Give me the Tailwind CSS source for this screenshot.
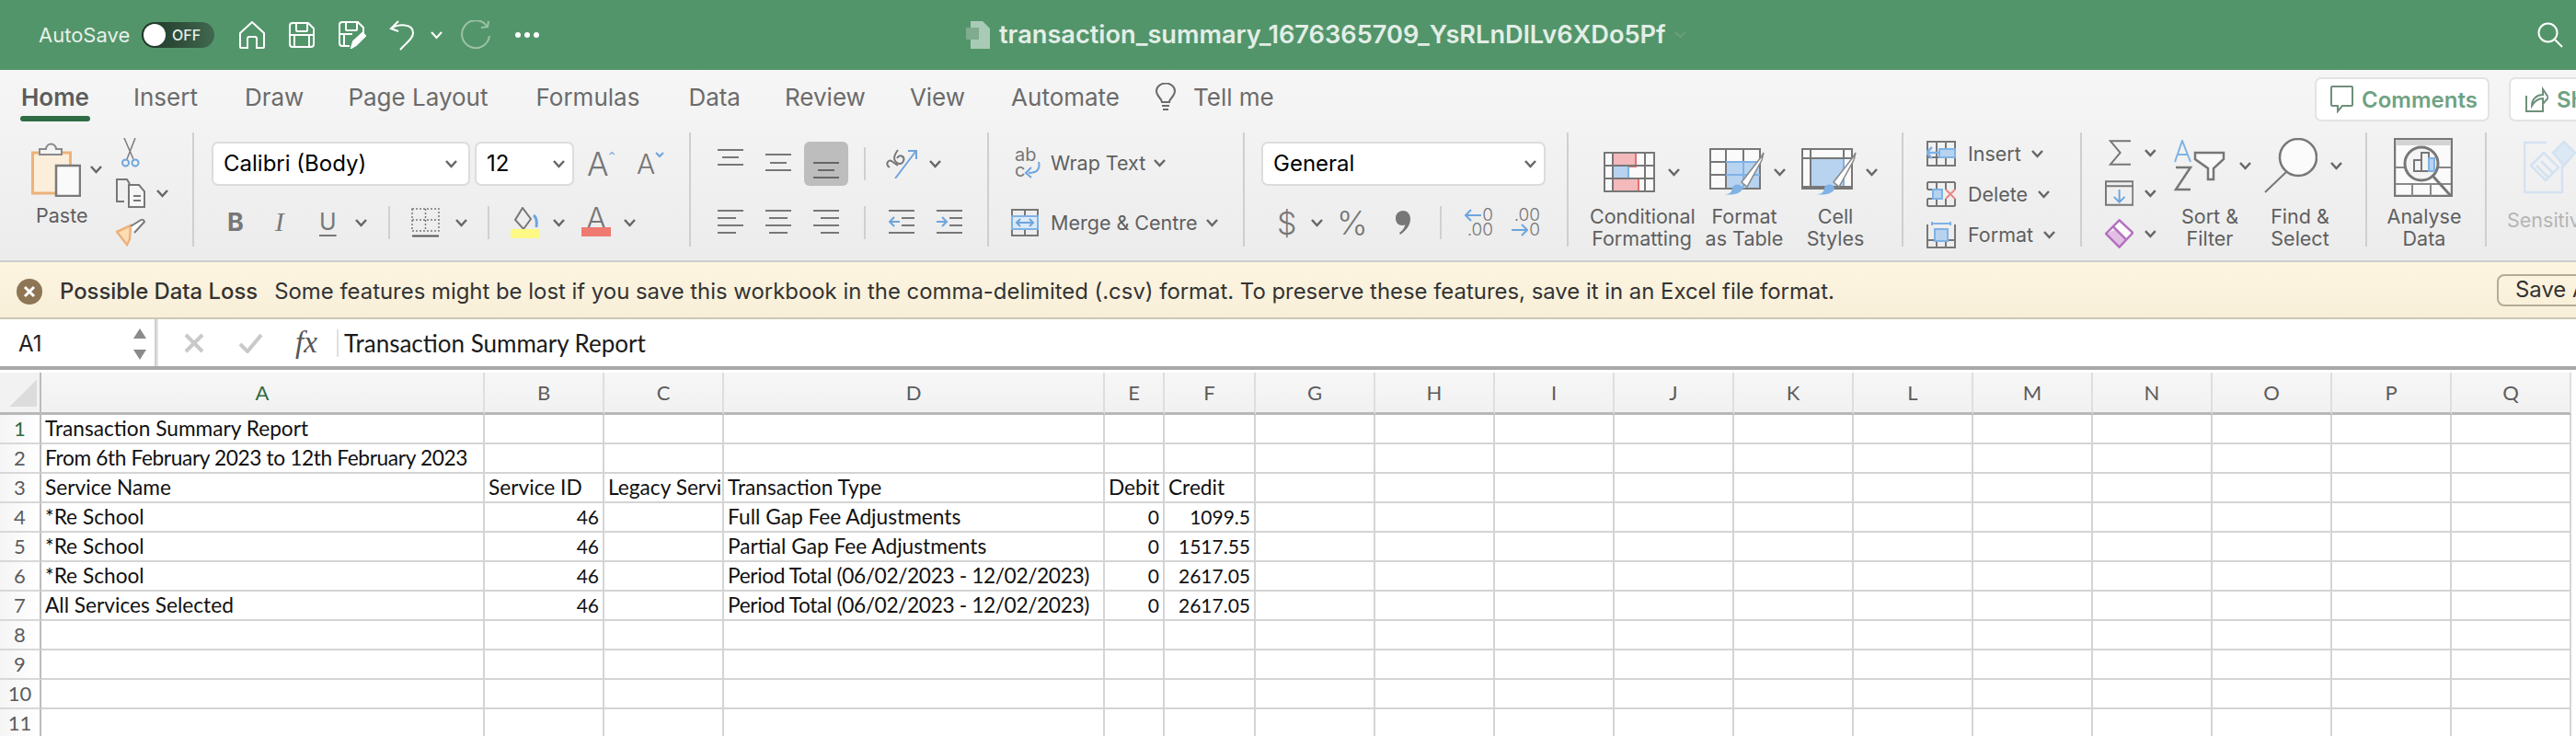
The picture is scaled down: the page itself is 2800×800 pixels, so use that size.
<!DOCTYPE html>
<html lang="en">
<head>
  <meta charset="UTF-8" />
  <title>transaction_summary_1676365709_YsRLnDlLv6XDo5Pf</title>
  <script src="https://cdn.jsdelivr.net/npm/@tailwindcss/browser@4"></script>
</head>
<body class="w-[2800px] h-[800px] overflow-hidden bg-white font-['Inter','Noto_Sans',sans-serif]">

  <!-- title bar -->
  <header class="h-[76px] bg-[#53956a] flex items-center text-white">
    <span class="ml-[42px] w-[112px] text-[22px] text-[#e6f0ea]">AutoSave</span>
    <div class="w-[79px] h-[28px] rounded-full bg-gradient-to-r from-[#1d3325] to-[#41694f] flex items-center pl-[2px]">
      <span class="w-[24px] h-[24px] rounded-full bg-white"></span>
      <span class="ml-[7px] text-[16px] text-[#e6f0ea] font-medium">OFF</span>
    </div>
    <svg class="ml-[27px]" width="28" height="30" viewBox="0 0 28 30" fill="none" stroke="#fff" stroke-width="2"><path d="M1 13 14 1l13 12v15a1 1 0 0 1-1 1h-7v-10a2 2 0 0 0-2-2h-6a2 2 0 0 0-2 2v10H2a1 1 0 0 1-1-1z"/></svg>
    <svg class="ml-[26px]" width="28" height="28" viewBox="0 0 28 28" fill="none" stroke="#fff" stroke-width="2"><path d="M4 1h17l6 6v17a3 3 0 0 1-3 3H4a3 3 0 0 1-3-3V4a3 3 0 0 1 3-3z"/><path d="M8 1v8a1 1 0 0 0 1 1h10a1 1 0 0 0 1-1V1M1 14h26M6 14v13M22 14v13"/></svg>
    <svg class="ml-[26px]" width="30" height="30" viewBox="0 0 30 30" fill="none" stroke="#fff" stroke-width="2"><path d="M12 27H4a3 3 0 0 1-3-3V4a3 3 0 0 1 3-3h17l6 6v7"/><path d="M8 1v8a1 1 0 0 0 1 1h10a1 1 0 0 0 1-1V1M1 14h14M6 14v13"/><path d="M14 29l2-7 10-9 3 3-10 10z" fill="#fff"/></svg>
    <svg class="ml-[25px]" width="28" height="33" viewBox="0 0 28 33" fill="none" stroke="#fff" stroke-width="2"><path d="M10 1 2 9l8 3"/><path d="M2 9c8-5 24-6 24 5 0 6-7 10-14 18"/></svg>
    <svg class="ml-[17px]" width="13" height="9" viewBox="0 0 13 9" fill="none" stroke="#fff" stroke-width="2"><path d="m1 1 5.500 6L12 1"/></svg>
    <svg class="ml-[20px]" width="33" height="33" viewBox="0 0 33 33" fill="none" stroke="#9cc2a9" stroke-width="2"><path d="M28 6A15 15 0 1 0 31 17"/><path d="M22 8l7-1 1-6"/></svg>
    <span class="ml-[26px] flex gap-[4px]"><i class="w-[6px] h-[6px] rounded-full bg-white"></i><i class="w-[6px] h-[6px] rounded-full bg-white"></i><i class="w-[6px] h-[6px] rounded-full bg-white"></i></span>
    <svg class="ml-[464px]" width="26" height="30" viewBox="0 0 26 30"><path d="M5 0h13l8 8v22H5z" fill="#a9cbb5"/><path d="M0 7h14v13H0z" fill="#7fab8f"/></svg>
    <span class="ml-[10px] text-[27.2px] font-semibold text-[#e3eee7] whitespace-nowrap">transaction_summary_1676365709_YsRLnDlLv6XDo5Pf</span>
    <svg class="ml-[9px]" width="13" height="8" viewBox="0 0 13 8" fill="none" stroke="#6b9f7e" stroke-width="2"><path d="m1 1 5.500 5L12 1"/></svg>
    <svg class="ml-auto mr-[14px]" width="28" height="28" viewBox="0 0 28 28" fill="none" stroke="#fff" stroke-width="2"><circle cx="11.500" cy="11.500" r="10"/><path d="m19 19 8 8"/></svg>
  </header>

  <!-- ribbon -->
  <section class="h-[209px] border-b-2 border-[#cdcdcd] bg-gradient-to-b from-[#f6f6f6] to-[#ececec] overflow-hidden">
    <!-- tabs -->
    <nav class="h-[68px] flex text-[26px] text-[#6b6b6b] whitespace-nowrap">
      <div class="ml-[22px] w-[76px] h-[56px] flex flex-col items-center">
        <span class="mt-[10px] font-semibold text-[#5c5c5c]">Home</span>
        <span class="mt-auto w-full h-[6px] rounded-full bg-[#2f6b45]"></span>
      </div>
      <span class="ml-[47px] mt-[10px]">Insert</span>
      <span class="ml-[51px] mt-[10px]">Draw</span>
      <span class="ml-[48px] mt-[10px]">Page Layout</span>
      <span class="ml-[52px] mt-[10px]">Formulas</span>
      <span class="ml-[53px] mt-[10px]">Data</span>
      <span class="ml-[48px] mt-[10px]">Review</span>
      <span class="ml-[48px] mt-[10px]">View</span>
      <span class="ml-[50px] mt-[10px]">Automate</span>
      <svg class="ml-[39px] mt-[14px]" width="22" height="30" viewBox="0 0 22 30" fill="none" stroke="#6b6b6b" stroke-width="2"><path d="M7 21c0-4-6-6-6-12a10 8.500 0 0 1 20 0c0 6-6 8-6 12z"/><path d="M7 25h8M8 29h6"/></svg>
      <span class="ml-[19px] mt-[10px]">Tell me</span>
      <div class="ml-auto mt-[8px] w-[190px] h-[48px] shrink-0 bg-white border-2 border-[#e3e3e3] rounded-[7px] flex items-center">
        <svg class="ml-[15px] shrink-0" width="25" height="30" viewBox="0 0 25 30" fill="none" stroke="#6f8f7b" stroke-width="2"><path d="M2 1h21a1 1 0 0 1 1 1v19a1 1 0 0 1-1 1H13l-5 6v-6H2a1 1 0 0 1-1-1V2a1 1 0 0 1 1-1z"/></svg>
        <span class="ml-[9px] mt-[2px] text-[24px] font-semibold text-[#6fa283]">Comments</span>
      </div>
      <div class="ml-[21px] mt-[8px] -mr-[60px] w-[133px] h-[48px] shrink-0 bg-white border-2 border-[#e3e3e3] rounded-[7px] flex items-center">
        <svg class="ml-[16px] shrink-0" width="25" height="28" viewBox="0 0 25 28" fill="none" stroke="#6f8f7b" stroke-width="2"><path d="M1 10v17h18v-7"/><path d="M7 21c0-8 6-12 12-12V3l6 9-6 7v-6c-6 0-9 3-12 8z"/></svg>
        <span class="ml-[9px] mt-[2px] text-[24px] font-semibold text-[#6fa283]">Share</span>
      </div>
    </nav>

    <!-- groups -->
    <div class="flex h-[124px] text-[#5f5f5f] text-[21.5px] whitespace-nowrap">

      <!-- clipboard -->
      <div class="w-[211px] shrink-0 border-r-2 border-[#cfcfcf] flex">
        <div class="w-[126px] shrink-0">
          <div class="pl-[34px] pt-[10px] flex items-center">
            <svg width="54" height="60" viewBox="0 0 54 60" fill="none"><rect x="1.500" y="12" width="41" height="44" fill="#fbeedb" stroke="#edb27a" stroke-width="3"/><path d="M9 14V8h7a5 5 0 0 1 11 0h6v6z" fill="#f4f4f4" stroke="#8a8a8a" stroke-width="2"/><rect x="27" y="26" width="26" height="33" fill="#fafafa" stroke="#7a7a7a" stroke-width="2.500"/></svg>
            <svg class="ml-[10px]" width="13" height="9" viewBox="0 0 13 9" fill="none" stroke="#666" stroke-width="2.500"><path d="m1 1 5.500 6L12 1"/></svg>
          </div>
          <div class="pl-[39px] mt-[4px]">Paste</div>
        </div>
        <div class="flex flex-col">
          <svg class="ml-[6px] mt-[6px]" width="20" height="32" viewBox="0 0 20 32" fill="none"><path d="M3 0 13 23M15 0 6 23" stroke="#7a7a7a" stroke-width="1.500"/><circle cx="4.500" cy="27" r="3.500" stroke="#6ea5dd" stroke-width="2"/><circle cx="15" cy="27" r="3.500" stroke="#6ea5dd" stroke-width="2"/></svg>
          <div class="flex items-center mt-[12px]">
            <svg width="32" height="32" viewBox="0 0 32 32" fill="none" stroke="#777" stroke-width="2"><path d="M9 25H1V1h11l3 5"/><path d="M14 7h11l6 7v17H14z" fill="#f6f6f6"/><path d="M19 19h8M19 24h8"/></svg>
            <svg class="ml-[12px]" width="13" height="9" viewBox="0 0 13 9" fill="none" stroke="#666" stroke-width="2.500"><path d="m1 1 5.500 6L12 1"/></svg>
          </div>
          <svg class="mt-[12px]" width="32" height="30" viewBox="0 0 32 30" fill="none"><path d="M1 14 16 7l-1 15-3 6z" fill="#fbdcb5" stroke="#edb27a" stroke-width="2.500"/><path d="m16 8 13-8 2 3-11 12" fill="#fff" stroke="#7a7a7a" stroke-width="2"/></svg>
        </div>
      </div>

      <!-- font -->
      <div class="w-[540px] shrink-0 border-r-2 border-[#cfcfcf] pl-[19px] pt-[10px]">
        <div class="flex items-center h-[48px]">
          <div class="w-[281px] h-[48px] bg-white border-2 border-[#dcdcdc] rounded-[7px] flex items-center pl-[11px] pr-[12px] text-[24px] text-black">
            <span>Calibri (Body)</span>
            <svg class="ml-auto" width="13" height="9" viewBox="0 0 13 9" fill="none" stroke="#666" stroke-width="2.500"><path d="m1 1 5.500 6L12 1"/></svg>
          </div>
          <div class="ml-[5px] w-[108px] h-[48px] bg-white border-2 border-[#dcdcdc] rounded-[7px] flex items-center pl-[11px] pr-[8px] text-[24px] text-black">
            <span>12</span>
            <svg class="ml-auto" width="13" height="9" viewBox="0 0 13 9" fill="none" stroke="#666" stroke-width="2.500"><path d="m1 1 5.500 6L12 1"/></svg>
          </div>
          <div class="ml-[14px] flex w-[30px] text-[35px] font-light text-[#777] leading-none">A<svg class="mt-[2px]" width="10" height="7" viewBox="0 0 10 7" fill="none" stroke="#6ea5dd" stroke-width="2"><path d="m1 6 4-4 4 4"/></svg></div>
          <div class="ml-[24px] flex text-[30px] font-light text-[#777] leading-none">A<svg class="mt-[2px]" width="10" height="7" viewBox="0 0 10 7" fill="none" stroke="#6ea5dd" stroke-width="2"><path d="m1 1 4 4 4-4"/></svg></div>
        </div>
        <div class="flex items-center h-[36px] mt-[22px] text-[#777]">
          <span class="w-[14px] ml-[17px] text-[27px] font-bold">B</span>
          <span class="w-[14px] ml-[38px] text-[29px] font-['Liberation_Serif'] italic">I</span>
          <span class="w-[17px] ml-[34px] text-[25px] underline underline-offset-[5px]">U</span>
          <svg class="ml-[22px]" width="13" height="9" viewBox="0 0 13 9" fill="none" stroke="#666" stroke-width="2.500"><path d="m1 1 5.500 6L12 1"/></svg>
          <span class="ml-[23px] w-[2px] h-[36px] bg-[#d0d0d0]"></span>
          <svg class="ml-[23px]" width="31" height="32" viewBox="0 0 31 32" fill="none" stroke="#777"><path d="M1 1h29v24H1zM15.500 1v24M1 13h29" stroke-width="1.500" stroke-dasharray="2 2"/><path d="M1 30.500h29" stroke="#555" stroke-width="2"/></svg>
          <svg class="ml-[17px]" width="13" height="9" viewBox="0 0 13 9" fill="none" stroke="#666" stroke-width="2.500"><path d="m1 1 5.500 6L12 1"/></svg>
          <span class="ml-[22px] w-[2px] h-[36px] bg-[#d0d0d0]"></span>
          <svg class="ml-[23px]" width="32" height="34" viewBox="0 0 32 34" fill="none"><path d="M13 1 5 14l9 10 8-11z" stroke="#777" stroke-width="2"/><path d="M25 9c3 2 4 6 3 13" stroke="#6ea5dd" stroke-width="3"/><rect y="24" width="32" height="10" fill="#fdf984"/></svg>
          <svg class="ml-[14px]" width="13" height="9" viewBox="0 0 13 9" fill="none" stroke="#666" stroke-width="2.500"><path d="m1 1 5.500 6L12 1"/></svg>
          <div class="ml-[18px] w-[32px] flex flex-col items-center leading-none"><span class="text-[33px] font-light h-[26px] -mt-[6px]">A</span><span class="w-full h-[10px] bg-[#ef7a71]"></span></div>
          <svg class="ml-[14px]" width="13" height="9" viewBox="0 0 13 9" fill="none" stroke="#666" stroke-width="2.500"><path d="m1 1 5.500 6L12 1"/></svg>
        </div>
      </div>

      <!-- alignment -->
      <div class="w-[324px] shrink-0 border-r-2 border-[#cfcfcf] pl-[29px] pt-[10px]">
        <div class="flex items-center h-[48px]">
          <svg width="28" height="48" viewBox="0 0 28 48" stroke="#777" stroke-width="2"><path d="M0 9h28M5 17h18M0 25h28"/></svg>
          <svg class="ml-[24px]" width="28" height="48" viewBox="0 0 28 48" stroke="#777" stroke-width="2"><path d="M0 14h28M5 23h18M0 31h28"/></svg>
          <div class="ml-[14px] w-[48px] h-[48px] rounded-[6px] bg-[#bdbdbd] flex justify-center"><svg width="28" height="48" viewBox="0 0 28 48" stroke="#666" stroke-width="2"><path d="M0 23h28M5 31h18M0 39h28"/></svg></div>
          <span class="ml-[17px] w-[2px] h-[36px] bg-[#d0d0d0]"></span>
          <svg class="ml-[22px]" width="34" height="32" viewBox="0 0 34 32" fill="none"><path d="M10 32 32 3M24 2l9 0 0 9" stroke="#6ea5dd" stroke-width="2"/><path d="M4 20c-5-3-2-9 2-7l7 5m-1-8c3-5 9-2 7 3s-7 3-9 0 0-8 3-12" stroke="#777" stroke-width="2"/></svg>
          <svg class="ml-[13px]" width="13" height="9" viewBox="0 0 13 9" fill="none" stroke="#666" stroke-width="2.500"><path d="m1 1 5.500 6L12 1"/></svg>
        </div>
        <div class="flex items-center h-[36px] mt-[22px]">
          <svg width="28" height="36" viewBox="0 0 28 36" stroke="#777" stroke-width="2"><path d="M0 5h28M0 13h20M0 21h28M0 29h20"/></svg>
          <svg class="ml-[24px]" width="28" height="36" viewBox="0 0 28 36" stroke="#777" stroke-width="2"><path d="M0 5h28M4 13h20M0 21h28M4 29h20"/></svg>
          <svg class="ml-[24px]" width="28" height="36" viewBox="0 0 28 36" stroke="#777" stroke-width="2"><path d="M0 5h28M8 13h20M0 21h28M8 29h20"/></svg>
          <span class="ml-[27px] w-[2px] h-[36px] bg-[#d0d0d0]"></span>
          <svg class="ml-[25px]" width="28" height="36" viewBox="0 0 28 36" fill="none"><path d="M0 5h28M14 13h14M14 21h14M0 29h28" stroke="#777" stroke-width="2"/><path d="M12 17H1m5-5-5 5 5 5" stroke="#6ea5dd" stroke-width="2"/></svg>
          <svg class="ml-[24px]" width="28" height="36" viewBox="0 0 28 36" fill="none"><path d="M0 5h28M14 13h14M14 21h14M0 29h28" stroke="#777" stroke-width="2"/><path d="M0 17h11m-5-5 5 5-5 5" stroke="#6ea5dd" stroke-width="2"/></svg>
        </div>
      </div>

      <!-- wrap and merge -->
      <div class="w-[278px] shrink-0 border-r-2 border-[#cfcfcf] pl-[24px] pt-[13px]">
        <div class="flex items-center h-[40px]">
          <div class="relative w-[43px] h-[40px] pl-[4px] text-[20px] text-[#777] leading-[17px] pt-[3px]">
            <div>ab</div>
            <div>c</div>
            <svg class="absolute left-[14px] top-[18px]" width="18" height="20" viewBox="0 0 18 20" fill="none" stroke="#6ea5dd" stroke-width="2"><path d="M16 1c2 8-2 12-11 12"/><path d="m8 7-6 6 6 5"/></svg>
          </div>
          <span>Wrap Text</span>
          <svg class="ml-[9px]" width="13" height="9" viewBox="0 0 13 9" fill="none" stroke="#666" stroke-width="2.500"><path d="m1 1 5.500 6L12 1"/></svg>
        </div>
        <div class="flex items-center h-[40px] mt-[25px]">
          <svg class="w-[30px]" height="30" viewBox="0 0 30 30" fill="none"><path d="M1 1h28v28H1zM1 8h28M1 22h28M15 1v7M15 22v7" stroke="#777" stroke-width="2"/><path d="M1 8h28v14H1z" fill="#dce9f7" stroke="#7fb2e5" stroke-width="2"/><path d="M6 15h18M10 11l-4 4 4 4M20 11l4 4-4 4" stroke="#6ea5dd" stroke-width="2"/></svg>
          <span class="ml-[13px]">Merge &amp; Centre</span>
          <svg class="ml-[9px]" width="13" height="9" viewBox="0 0 13 9" fill="none" stroke="#666" stroke-width="2.500"><path d="m1 1 5.500 6L12 1"/></svg>
        </div>
      </div>

      <!-- number -->
      <div class="w-[352px] shrink-0 border-r-2 border-[#cfcfcf] pl-[18px] pt-[10px]">
        <div class="w-[309px] h-[48px] bg-white border-2 border-[#dcdcdc] rounded-[7px] flex items-center pl-[11px] pr-[8px] text-[24px] text-black">
          <span>General</span>
          <svg class="ml-auto" width="13" height="9" viewBox="0 0 13 9" fill="none" stroke="#666" stroke-width="2.500"><path d="m1 1 5.500 6L12 1"/></svg>
        </div>
        <div class="flex items-center h-[36px] mt-[22px] text-[#777]">
          <span class="ml-[17px] w-[20px] text-[34px] font-light">$</span>
          <svg class="ml-[17px]" width="13" height="9" viewBox="0 0 13 9" fill="none" stroke="#666" stroke-width="2.500"><path d="m1 1 5.500 6L12 1"/></svg>
          <span class="ml-[15px] w-[40px] text-[36px] font-light">%</span>
          <svg class="ml-[24px]" width="16" height="26" viewBox="0 0 16 26" fill="#777"><path d="M8 0c5 0 8 4 8 9 0 7-5 13-11 17l-1-2c4-3 6-6 6-9-1 1-2 1-3 1-4 0-7-3-7-8s4-8 8-8z"/></svg>
          <span class="ml-[32px] w-[2px] h-[36px] bg-[#d0d0d0]"></span>
          <div class="ml-[25px] w-[31px] flex flex-col text-[19px] font-light leading-[16px]">
            <div class="flex items-center justify-end">
              <svg class="mr-[1px]" width="18" height="14" viewBox="0 0 18 14" fill="none" stroke="#6ea5dd" stroke-width="2"><path d="M18 7H2m5-6L1 7l6 6"/></svg>
              <span>0</span>
            </div>
            <div class="text-right">.00</div>
          </div>
          <div class="ml-[20px] w-[31px] flex flex-col text-[19px] font-light leading-[16px]">
            <div class="text-right">.00</div>
            <div class="flex items-center justify-end">
              <svg class="mr-[1px]" width="18" height="14" viewBox="0 0 18 14" fill="none" stroke="#6ea5dd" stroke-width="2"><path d="M0 7h16m-5-6 6 6-6 6"/></svg>
              <span>0</span>
            </div>
          </div>
        </div>
      </div>

      <!-- styles -->
      <div class="w-[364px] shrink-0 border-r-2 border-[#cfcfcf] flex text-center leading-[24px]">
        <div class="ml-[23px] w-[113px]">
          <div class="h-[70px] pl-[15px] pt-[16px] flex items-center">
            <svg width="56" height="44" viewBox="0 0 56 44" fill="none"><path d="M1 1h54v42H1z" fill="#fafafa"/><path d="M10 1h25v15H10zM10 29h28v14H10z" fill="#f4b9bb" stroke="#e0726c" stroke-width="2"/><path d="M10 15h17v14H10z" fill="#b7d3f0" stroke="#7fb2e5" stroke-width="2"/><path d="M1 1h54v42H1zM10 1v42M45 1v42M1 15h54M1 29h54" stroke="#777" stroke-width="2"/></svg>
            <svg class="ml-[14px]" width="13" height="9" viewBox="0 0 13 9" fill="none" stroke="#666" stroke-width="2.500"><path d="m1 1 5.500 6L12 1"/></svg>
          </div>
          <div class="mt-[9px]">Conditional<br />Formatting</div>
        </div>
        <div class="ml-[4px] w-[100px]">
          <div class="h-[70px] pl-[13px] pt-[16px] flex items-center">
            <svg width="60" height="52" viewBox="0 0 60 52" fill="none"><path d="M1 1h54v43H1z" fill="#fafafa"/><path d="M18 15h37v29H18z" fill="#b7d3f0"/><path d="M1 1h54v43H1zM18 1v43M37 1v43M1 15h54M1 29h54" stroke="#777" stroke-width="2"/><path d="M18 15h37M18 29h37M37 15v29" stroke="#7fb2e5" stroke-width="2"/><path d="M35 37 56 10l3-5-2 8-16 29z" fill="#fff" stroke="#888" stroke-width="1.500"/><path d="M15 50c6 1 10-2 10-7a6 6 0 0 1 11 0c0 6-10 9-21 7z" fill="#7fb2e5"/></svg>
            <svg class="ml-[10px]" width="13" height="9" viewBox="0 0 13 9" fill="none" stroke="#666" stroke-width="2.500"><path d="m1 1 5.500 6L12 1"/></svg>
          </div>
          <div class="mt-[9px] ml-[2px]">Format<br />as Table</div>
        </div>
        <div class="w-[100px]">
          <div class="h-[70px] pl-[13px] pt-[16px] flex items-center">
            <svg width="60" height="52" viewBox="0 0 60 52" fill="none"><path d="M1 1h54v43H1z" fill="#fafafa"/><path d="M10 11h36v31H10z" fill="#b7d3f0" stroke="#7fb2e5" stroke-width="2"/><path d="M1 1h54v43H1zM10 1v43M46 1v10M1 11h54M1 42h54" stroke="#777" stroke-width="2"/><path d="M35 37 56 10l3-5-2 8-16 29z" fill="#fff" stroke="#888" stroke-width="1.500"/><path d="M15 50c6 1 10-2 10-7a6 6 0 0 1 11 0c0 6-10 9-21 7z" fill="#7fb2e5"/></svg>
            <svg class="ml-[10px]" width="13" height="9" viewBox="0 0 13 9" fill="none" stroke="#666" stroke-width="2.500"><path d="m1 1 5.500 6L12 1"/></svg>
          </div>
          <div class="mt-[9px]">Cell<br />Styles</div>
        </div>
      </div>

      <!-- cells -->
      <div class="w-[194px] shrink-0 border-r-2 border-[#cfcfcf] pl-[25px] pt-[1px]">
        <div class="flex items-center h-[44px]">
          <svg width="32" height="28" viewBox="0 0 32 28" fill="none"><path d="M1 1h30v26H1zM11 1v26M21 1v26M1 18h30" stroke="#777" stroke-width="2"/><path d="M14 9h17v9H14z" fill="#b7d3f0" stroke="#7fb2e5" stroke-width="2"/><path d="M0 13h14M6 7l-6 6 6 6" stroke="#7fb2e5" stroke-width="2.500"/></svg>
          <span class="ml-[13px] w-[56px]">Insert</span>
          <svg class="ml-[13px]" width="13" height="9" viewBox="0 0 13 9" fill="none" stroke="#666" stroke-width="2.500"><path d="m1 1 5.500 6L12 1"/></svg>
        </div>
        <div class="flex items-center h-[44px]">
          <svg width="32" height="28" viewBox="0 0 32 28" fill="none"><path d="M1 1v8M11 1v8M21 1v8M31 1v8M1 19v8M11 19v8M21 19v8M31 19v8M1 1h30M1 27h30M1 9h6M1 19h6" stroke="#777" stroke-width="2"/><path d="M7 9h10v10H7z" fill="#b7d3f0" stroke="#7fb2e5" stroke-width="2"/><path d="m21 9 10 10M31 9 21 19" stroke="#ec8780" stroke-width="2"/></svg>
          <span class="ml-[13px] w-[63px]">Delete</span>
          <svg class="ml-[13px]" width="13" height="9" viewBox="0 0 13 9" fill="none" stroke="#666" stroke-width="2.500"><path d="m1 1 5.500 6L12 1"/></svg>
        </div>
        <div class="flex items-center h-[44px]">
          <svg width="32" height="30" viewBox="0 0 32 30" fill="none"><path d="M1 4v25h30V4M1 21h30M11 9v20M21 9v20" stroke="#777" stroke-width="2"/><path d="M9 9h14v13H9z" fill="#b7d3f0" stroke="#7fb2e5" stroke-width="2"/><path d="M6 1v4m20-4v4M6 3h20" stroke="#7fb2e5" stroke-width="2"/></svg>
          <span class="ml-[13px] w-[69px]">Format</span>
          <svg class="ml-[13px]" width="13" height="9" viewBox="0 0 13 9" fill="none" stroke="#666" stroke-width="2.500"><path d="m1 1 5.500 6L12 1"/></svg>
        </div>
      </div>

      <!-- editing -->
      <div class="w-[310px] shrink-0 border-r-2 border-[#cfcfcf] flex text-center leading-[24px]">
        <div class="ml-[25px] w-[56px]">
          <div class="flex items-center h-[44px]">
            <svg class="ml-[4px]" width="25" height="28" viewBox="0 0 25 28" fill="none" stroke="#777" stroke-width="2"><path d="M25 1H2l11 13L2 27h23"/></svg>
            <svg class="ml-[15px]" width="13" height="9" viewBox="0 0 13 9" fill="none" stroke="#666" stroke-width="2.500"><path d="m1 1 5.500 6L12 1"/></svg>
          </div>
          <div class="flex items-center h-[44px]">
            <svg width="32" height="28" viewBox="0 0 32 28" fill="none"><path d="M1 1h30v26H1zM1 6h30" stroke="#777" stroke-width="2"/><path d="M16 10v14m-6-6 6 6 6-6" stroke="#6ea5dd" stroke-width="2"/></svg>
            <svg class="ml-[12px]" width="13" height="9" viewBox="0 0 13 9" fill="none" stroke="#666" stroke-width="2.500"><path d="m1 1 5.500 6L12 1"/></svg>
          </div>
          <div class="flex items-center h-[44px]">
            <svg width="32" height="32" viewBox="0 0 32 32" fill="none"><path d="M1 16 10 25l6 6 15-16-8-8z" fill="#e2bee5"/><path d="m10 8 14 14 7-7L16 1z" fill="#fff"/><path d="M1 16 16 1l15 14-15 16zM9 8l14 14" stroke="#b56fc0" stroke-width="2.500"/></svg>
            <svg class="ml-[12px]" width="13" height="9" viewBox="0 0 13 9" fill="none" stroke="#666" stroke-width="2.500"><path d="m1 1 5.500 6L12 1"/></svg>
          </div>
        </div>
        <div class="ml-[18px] w-[100px] text-center">
          <div class="h-[70px] flex items-center pt-[2px]">
            <svg width="58" height="56" viewBox="0 0 58 56" fill="none"><path d="M2 24 10 1l9 23M5 16h11" stroke="#7fb2e5" stroke-width="2"/><path d="M3 30h16L3 54h16" stroke="#777" stroke-width="2.500"/><path d="M24 14h31v7L44 31v12h-6V31L24 21z" stroke="#777" stroke-width="2.500" fill="#f8f8f8"/></svg>
            <svg class="ml-[14px]" width="13" height="9" viewBox="0 0 13 9" fill="none" stroke="#666" stroke-width="2.500"><path d="m1 1 5.500 6L12 1"/></svg>
          </div>
          <div class="mt-[9px] -ml-[20px]">Sort &amp;<br />Filter</div>
        </div>
        <div class="ml-[-1px] w-[100px]">
          <div class="h-[70px] flex items-center pt-[2px]">
            <svg width="58" height="60" viewBox="0 0 58 60" fill="none" stroke="#777"><ellipse cx="37" cy="21" rx="20" ry="20" fill="#fbfbfb" stroke-width="2.500"/><path d="M24 37 1 59" stroke-width="2"/></svg>
            <svg class="ml-[14px]" width="13" height="9" viewBox="0 0 13 9" fill="none" stroke="#666" stroke-width="2.500"><path d="m1 1 5.500 6L12 1"/></svg>
          </div>
          <div class="mt-[9px] -ml-[22px]">Find &amp;<br />Select</div>
        </div>
      </div>

      <!-- analyse data -->
      <div class="w-[130px] shrink-0 border-r-2 border-[#cfcfcf] text-center leading-[24px]">
        <svg class="ml-[29px] mt-[6px]" width="64" height="64" viewBox="0 0 64 64" fill="none"><path d="M1 1h62v62H1z" fill="#fafafa" stroke="#777" stroke-width="2.500"/><path d="M2 2h60v6H2z" fill="#d4d4d4"/><path d="M2 32h60M2 50h60M20 50v13M40 50v13" stroke="#888" stroke-width="2"/><circle cx="30" cy="28" r="18" fill="#f4f4f4" stroke="#777" stroke-width="3"/><path d="M22 24h8v12h-8zM30 16h8v20h-8z" stroke="#777" stroke-width="2"/><path d="M38 22h6v14h-6z" fill="#b7d3f0" stroke="#7fb2e5" stroke-width="2"/><path d="m43 42 19 21" stroke="#777" stroke-width="3"/></svg>
        <div class="mt-[9px] -ml-[4px]">Analyse<br />Data</div>
      </div>

      <!-- sensitivity -->
      <div class="text-[#b5b5b5] flex-1 overflow-hidden">
        <svg class="ml-[40px] mt-[6px]" width="57" height="64" viewBox="0 0 57 64" fill="none" stroke="#d3e2f1" stroke-width="2.500"><path d="M42 30v29H1V5h24"/><path d="m8 30 14-14 16 16-14 14zM14 30l12 12M19 25l12 12" /><path d="m32 16 12-12 12 12-12 14z" fill="#dce8f4"/></svg>
        <div class="mt-[9px] ml-[22px]">Sensitivity</div>
      </div>
    </div>
  </section>

  <!-- message bar -->
  <div class="h-[62px] pt-[4px] border-b-2 border-[#cdc6b5] bg-gradient-to-b from-[#fdf5e0] to-[#f8efd9] flex items-center text-[23.900px] text-[#333] whitespace-nowrap">
    <svg class="ml-[18px]" width="28" height="28" viewBox="0 0 28 28"><circle cx="14" cy="14" r="14" fill="#8d7555"/><path d="m9 9 10 10M19 9 9 19" stroke="#fff" stroke-width="3"/></svg>
    <span class="ml-[19px] font-medium">Possible Data Loss</span>
    <span class="ml-[18px]">Some features might be lost if you save this workbook in the comma-delimited (.csv) format. To preserve these features, save it in an Excel file format.</span>
    <div class="ml-auto -mr-[30px] -mt-[4px] w-[116px] h-[35px] border-2 border-[#b5ab97] rounded-[8px] pl-[18px] flex items-center">Save As</div>
  </div>

  <!-- formula bar -->
  <div class="h-[53px] flex border-b-2 border-[#a8a8a8] bg-white">
    <div class="w-[170px] h-[51px] border-r-2 border-[#cfcfcf] flex items-center pl-[20px] pt-[2px] text-[24px] text-[#222]">
      <span>A1</span>
      <svg class="ml-auto mr-[9px]" width="14" height="34" viewBox="0 0 14 34" fill="#8a8a8a"><path d="M7 0l7 11H0zM7 34l7-11H0z"/></svg>
    </div>
    <span class="w-[2px] bg-[#e4e4e4]"></span>
    <div class="flex items-center flex-1">
      <svg class="ml-[28px]" width="22" height="22" viewBox="0 0 22 22" stroke="#c9c9c9" stroke-width="4"><path d="m2 2 18 18M20 2 2 20"/></svg>
      <svg class="ml-[37px]" width="27" height="22" viewBox="0 0 27 22" fill="none" stroke="#c9c9c9" stroke-width="4"><path d="m2 12 8 8L25 2"/></svg>
      <span class="ml-[35px] w-[31px] font-['Liberation_Serif'] italic text-[33px] text-[#555]">fx</span>
      <span class="ml-[14px] w-[2px] h-[30px] bg-[#e0e0e0]"></span>
      <span class="ml-[6px] pt-[2px] font-['Lato'] text-[26px] text-[#1a1a1a]">Transaction Summary Report</span>
    </div>
  </div>

  <!-- sheet -->
  <div class="pt-[3px] border-t-2 border-[#a8a8a8]">
    <div id="sheet" class="grid grid-cols-[45px_482px_130px_130px_414px_65px_99px_130px_130px_130px_130px_130px_130px_130px_130px_130px_130px_130px] grid-rows-[46px_repeat(11,32px)] font-['Lato'] text-[22.7px] text-[#111] leading-[30px]"></div>
  </div>

  <script>
    const columns = ['A','B','C','D','E','F','G','H','I','J','K','L','M','N','O','P','Q'];
    const rows = {
      1: {A: 'Transaction Summary Report'},
      2: {A: 'From 6th February 2023 to 12th February 2023'},
      3: {A: 'Service Name', B: 'Service ID', C: 'Legacy Service ID', D: 'Transaction Type', E: 'Debit', F: 'Credit'},
      4: {A: '*Re School', B: 46, D: 'Full Gap Fee Adjustments', E: 0, F: 1099.5},
      5: {A: '*Re School', B: 46, D: 'Partial Gap Fee Adjustments', E: 0, F: 1517.55},
      6: {A: '*Re School', B: 46, D: 'Period Total (06/02/2023 - 12/02/2023)', E: 0, F: '2617.05'},
      7: {A: 'All Services Selected', B: 46, D: 'Period Total (06/02/2023 - 12/02/2023)', E: 0, F: '2617.05'},
    };

    const sheet = document.getElementById('sheet');
    let html = '<div class="bg-[#f2f2f2] border-r-2 border-b-[3px] border-r-[#bcbcbc] border-b-[#b8b8b8] pl-[11px] pt-[8px]"><div class="w-[29px] h-[29px] bg-gradient-to-br from-transparent from-50% to-[#dcdcdc] to-50%"></div></div>';
    for (const col of columns) {
      const active = col === 'A' ? 'text-[#2f6b45]' : 'text-[#5c5c5c]';
      html += '<div class="bg-gradient-to-b from-[#f7f7f7] to-[#f1f1f1] border-r-2 border-b-[3px] border-r-[#dedede] border-b-[#b8b8b8] flex items-center justify-center ' + active + ' text-[22px]">' + col + '</div>';
    }
    for (let r = 1; r <= 11; r++) {
      const active = r === 1 ? 'text-[#2f6b45]' : 'text-[#5c5c5c]';
      html += '<div class="bg-gradient-to-r from-[#f5f5f5] to-white border-r-2 border-b-2 border-r-[#bcbcbc] border-b-[#d8d8d8] flex items-center justify-center ' + active + ' text-[22px]">' + r + '</div>';
      for (const col of columns) {
        const value = (rows[r] || {})[col];
        const isNumber = typeof value === 'number' || (col === 'F' && value === '2617.05');
        const hasDates = typeof value === 'string' && /2023/.test(value);
        let align = isNumber ? 'text-right pr-[4px] text-[21px]' : 'pl-[4px]';
        if (hasDates) align += ' tracking-[-0.37px]';
        html += '<div class="border-r-2 border-b-2 border-[#d4d4d4] overflow-hidden whitespace-nowrap ' + align + '">' + (value === undefined ? '' : value) + '</div>';
      }
    }
    sheet.innerHTML = html;
  </script>
</body>
</html>
